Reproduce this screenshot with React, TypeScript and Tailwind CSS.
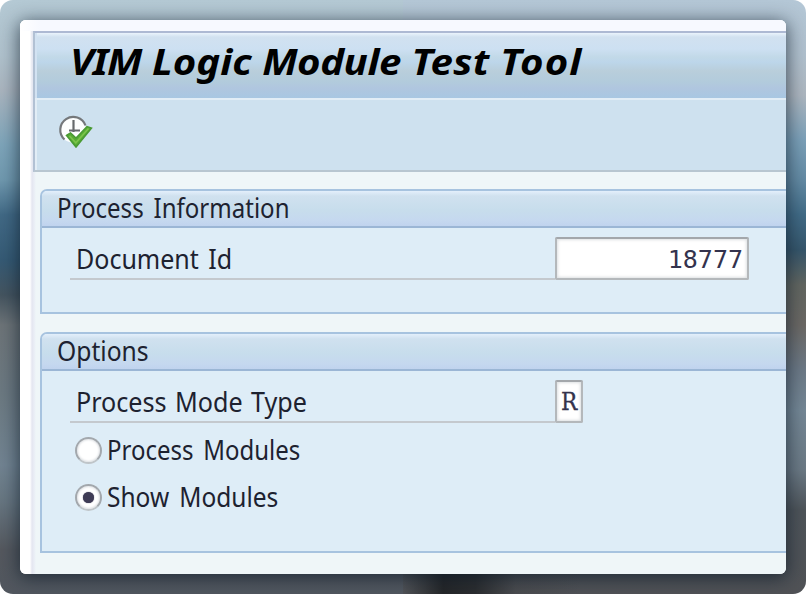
import type { ReactNode } from "react";

function Label({ className = "", children }: { className?: string; children: ReactNode }) {
  return (
    <span
      className={`block w-max origin-left whitespace-nowrap font-['Noto_Sans',sans-serif] text-[26.5px] leading-[34px] text-[#1d2230] ${className}`}
    >
      {children}
    </span>
  );
}

function ExecuteIcon() {
  return (
    <svg width="36" height="36" viewBox="0 0 36 36" fill="none" aria-label="Execute">
      <circle cx="16" cy="15.5" r="13" fill="#fdfefe" />
      <path d="M7.5 25.5A13 13 0 1 1 28.5 11.5" stroke="#75787b" strokeWidth="2.2" />
      <path d="M16.5 6v12M12 16.5h11" stroke="#66696c" strokeWidth="2.2" />
      <path d="M9.5 21.5l4-2.5 5.5 5L30 12.5l4.5 1.5L19 33Z" fill="#58ad35" stroke="#4a9a34" strokeWidth="1.5" />
      <path d="M12.5 22l6.3 6.7L31.5 14.5" stroke="#7cc44b" strokeWidth="1.6" />
    </svg>
  );
}

function Group({ title, className, children }: { title: ReactNode; className: string; children: ReactNode }) {
  return (
    <section
      className={`ml-[5px] overflow-hidden rounded-tl-[7px] border-2 border-r-0 border-[#a7c3df] bg-[#deedf7] ${className}`}
    >
      <header className="h-[37px] border-b-2 border-[#9bb6d5] bg-[linear-gradient(#e3effb_0,#d0e1ef_5px,#c7ddec_55%,#c5d8ef_85%,#c0d3ee)] pl-[15px]">
        {title}
      </header>
      {children}
    </section>
  );
}

function Radio({ checked = false }: { checked?: boolean }) {
  return (
    <span
      role="radio"
      aria-checked={checked}
      className="flex size-[27px] items-center justify-center rounded-full border-2 border-[#a3a8ad] border-b-[#bfc5c9] bg-white shadow-[inset_0_0_2px_1px_#dfe2e5]"
    >
      {checked && <span className="size-[11px] rounded-full bg-[#3e3b55] shadow-[0_0_1px_#3e3b55]" />}
    </span>
  );
}

export default function App() {
  return (
    <div className="h-[594px] w-[806px] bg-white">
      <div className="h-full overflow-hidden rounded-[13px] bg-[linear-gradient(90deg,transparent_50%,rgba(29,31,33,0.85)_55%,rgba(34,36,38,0.8)_59%,rgba(60,60,62,0.3)_64%,transparent_72%),linear-gradient(#b4c9d4_0,#afc1cc_55px,#a9b4be_90px,#7da4b9_145px,#6f98ae_180px,#416985_215px,#355a74_260px,#44545f_295px,#6c7377_325px,#6b7880_390px,#718391_465px,#677681_500px,#54585e_550px,#51575f_594px),linear-gradient(#b4c7d6_0,#b0c0cd_55px,#adb6bf_95px,#7ba0b8_140px,#638aa3_180px,#416b86_215px,#36566b_250px,#626660_285px,#6b6864_325px,#6c7986_370px,#748795_410px,#6b7984_470px,#4e5459_510px,#505256_594px)] bg-[length:100%_22px,50%_100%,50%_100%] bg-[position:0_bottom,left_top,right_top] bg-no-repeat p-5">
        <main className="h-[554px] overflow-hidden rounded-[6px] bg-white shadow-[0_3px_18px_1px_rgba(10,25,40,0.68)]">
          <div className="flex h-full flex-col bg-[linear-gradient(90deg,#fff_0,#fff_10px,#e4e6f0_12px,#e9edf5_14px,#eff6f8_16px,#eff6f8)]">
            <div className="h-[11px] shrink-0 bg-[linear-gradient(90deg,white,#f7f9ff_20px)]" />
            <div className="ml-[13px] h-[141px] shrink-0 border-y-2 border-l-2 border-t-[#adb9d3] border-b-[#b8c6d0] border-l-[#b2c1d4]">
              <div className="h-[65px] border-l-2 border-[#d2e2f2] bg-[linear-gradient(#eaf3fc_0,#d1e1f0_4px,#cde0f2_16px,#c2d9e8_24px,#bdd6ea_29px,#b9cedb_38px,#b2cbdc_49px,#b0c6df_55px,#a9c7e2_64px)] pl-[33px]">
                <h1 className="w-max origin-left scale-x-[1.149] whitespace-nowrap font-['Noto_Sans',sans-serif] text-[35px] font-bold italic leading-[58px] text-black">
                  <span className="tracking-[-0.9px]">VIM</span>{" "}
                  <span>Logic</span>{" "}
                  <span className="tracking-[-0.4px]">Module</span>{" "}
                  <span className="tracking-[0.4px]">Test</span>{" "}
                  <span className="tracking-[1px]">Tool</span>
                </h1>
              </div>
              <div className="h-[72px] border-l-2 border-t-2 border-[#e2edf6] bg-[#cee1ef] pl-[20px] pt-[14px]">
                <ExecuteIcon />
              </div>
            </div>
            <div className="mt-[17px] ml-[15px]">
              <Group className="h-[125px]" title={<Label className="scale-x-[0.907] [word-spacing:4px]">Process Information</Label>}>
                <div className="ml-[28px] flex h-[52px] pt-[9px]">
                  <div className="h-[43px] w-[485px] border-b-2 border-[#c4c9ce] pl-[6px] pt-[5px]">
                    <Label className="scale-x-[0.944] [word-spacing:3px]">Document Id</Label>
                  </div>
                  <div className="h-[43px] w-[194px] rounded-[2px] border-2 border-[#b4b8bb] border-t-[#a3a7ab] bg-white pr-[4px] text-right font-['DejaVu_Sans_Mono',monospace] text-[25px] leading-[41px] text-[#34334d] shadow-[inset_0_0_3px_1px_#dde0e2]">
                    18777
                  </div>
                </div>
              </Group>
              <Group className="mt-[18px] h-[221px]" title={<Label className="scale-x-[0.93]">Options</Label>}>
                <div className="ml-[28px] flex h-[52px] pt-[9px]">
                  <div className="h-[43px] w-[485px] border-b-2 border-[#c4c9ce] pl-[6px] pt-[5px]">
                    <Label className="scale-x-[0.948] [word-spacing:2px]">Process Mode Type</Label>
                  </div>
                  <div className="flex h-[43px] w-[28px] justify-center rounded-[2px] border-2 border-[#b4b8bb] border-t-[#a3a7ab] bg-white font-['DejaVu_Serif',serif] text-[24px] leading-[41px] text-[#34334d] shadow-[inset_0_0_3px_1px_#dde0e2]">
                    <span className="scale-x-[0.9] [-webkit-text-stroke:0.3px_#34334d]">R</span>
                  </div>
                </div>
                <div className="ml-[33px]" role="radiogroup">
                  <div className="mt-[8px] flex h-[38px] items-center gap-[5px]">
                    <Radio />
                    <Label className="scale-x-[0.904] [word-spacing:4px]">Process Modules</Label>
                  </div>
                  <div className="mt-[9px] flex h-[38px] items-center gap-[5px]">
                    <Radio checked />
                    <Label className="scale-x-[0.924] [word-spacing:4px]">Show Modules</Label>
                  </div>
                </div>
              </Group>
            </div>
          </div>
        </main>
      </div>
    </div>
  );
}
